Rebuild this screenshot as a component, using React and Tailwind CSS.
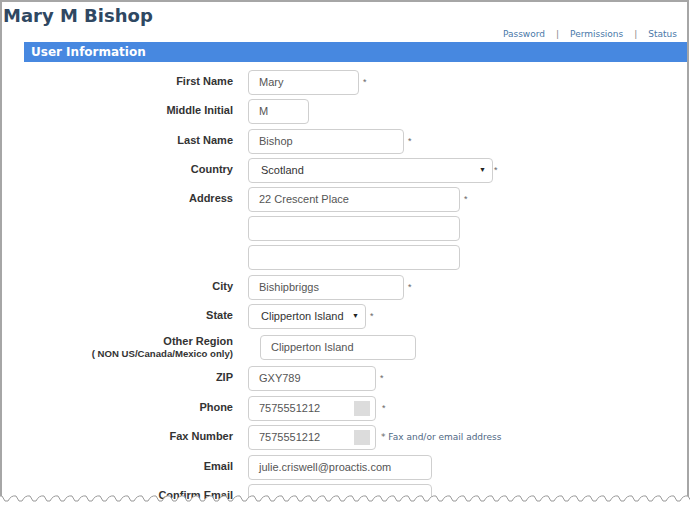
import React from 'react';

const labelFont = { fontFamily: '"Liberation Sans", Arial, sans-serif' };

// small grey required marker
const Req = () => <span className="ml-[4px] self-start pt-[8px] text-[9px] leading-none text-[#666]">*</span>;

const Field = ({ w, value, children }) => (
  <div className={`relative flex h-[25px] items-center rounded-[4px] border border-[#cfcfcf] bg-white pl-[10px] text-[11px] text-[#555] ${w}`}>
    {value}
    {children}
  </div>
);

const SelectBox = ({ w, value }) => (
  <div className={`relative flex h-[25px] items-center rounded-[4px] border border-[#cfcfcf] bg-white pl-[12px] pr-[6px] text-[11px] text-[#333] ${w}`}>
    <span className="flex-1">{value}</span>
    <span className="text-[7px] text-[#222]">▼</span>
  </div>
);

const Row = ({ mt, label, sub, children }) => (
  <div className={`grid grid-cols-[209px_1fr] gap-x-[15px] ${mt}`}>
    <div className="flex flex-col items-end text-right font-bold text-[11px] leading-[13px] text-[#333]">
      {sub ? (
        <>
          <span className="pt-[0px]">{label}</span>
          <span className="whitespace-nowrap text-[9.6px] leading-[12px]">{sub}</span>
        </>
      ) : (
        <span className="pt-[5px]">{label}</span>
      )}
    </div>
    <div className="flex items-start">{children}</div>
  </div>
);

const TornEdge = () => {
  const segs = [];
  for (let x = -6; x < 700; x += 14) {
    segs.push(`L ${x} 9 Q ${x + 3} 3 ${x + 8} 4 L ${x + 11} 9`);
  }
  const d = `M -6 9 ${segs.join(' ')}`;
  return (
    <svg className="absolute left-0 bottom-0" width="690" height="14" viewBox="0 0 690 14">
      <path d={`${d} L 700 14 L -6 14 Z`} fill="#fff" />
      <path d={d} fill="none" stroke="#9a9a9a" strokeWidth="1" />
    </svg>
  );
};

export default function App() {
  return (
    <div className="relative h-[506px] w-[690px] overflow-hidden bg-white" style={labelFont}>
      <div className="h-[506px] w-[689px] border-l-2 border-r-2 border-t-2 border-[#a6a6a6]">
        {/* header */}
        <div className="flex items-start justify-between">
          <h1
            className="pl-[1px] pt-[3px] text-[18px] font-bold leading-[22px] text-[#2f4862]"
            style={{ fontFamily: '"DejaVu Sans", Verdana, sans-serif' }}
          >
            Mary M Bishop
          </h1>
          <div
            className="flex gap-[11px] pr-[10px] pt-[26px] text-[9px] leading-[12px] text-[#4a78a8]"
            style={{ fontFamily: '"DejaVu Sans", Verdana, sans-serif' }}
          >
            <span>Password</span>
            <span className="text-[#888]">|</span>
            <span>Permissions</span>
            <span className="text-[#888]">|</span>
            <span>Status</span>
          </div>
        </div>

        <div className="pl-[22px]">
          <div
            className="mt-[2px] flex h-[20px] items-center bg-[#4788e0] pl-[7px] text-[12px] font-bold text-white"
            style={{ fontFamily: '"DejaVu Sans", Verdana, sans-serif' }}
          >
            User Information
          </div>

          <Row mt="mt-[8px]" label="First Name">
            <Field w="w-[111px]" value="Mary" />
            <Req />
          </Row>
          <Row mt="mt-[4px]" label="Middle Initial">
            <Field w="w-[61px]" value="M" />
          </Row>
          <Row mt="mt-[5px]" label="Last Name">
            <Field w="w-[156px]" value="Bishop" />
            <Req />
          </Row>
          <Row mt="mt-[4px]" label="Country">
            <SelectBox w="w-[245px]" value="Scotland" />
            <span className="ml-[1px] self-start pt-[8px] text-[9px] leading-none text-[#666]">*</span>
          </Row>
          <Row mt="mt-[4px]" label="Address">
            <Field w="w-[212px]" value="22 Crescent Place" />
            <Req />
          </Row>
          <Row mt="mt-[4px]" label="">
            <Field w="w-[212px]" value="" />
          </Row>
          <Row mt="mt-[4px]" label="">
            <Field w="w-[212px]" value="" />
          </Row>
          <Row mt="mt-[5px]" label="City">
            <Field w="w-[156px]" value="Bishipbriggs" />
            <Req />
          </Row>
          <Row mt="mt-[4px]" label="State">
            <SelectBox w="w-[118px]" value="Clipperton Island" />
            <Req />
          </Row>
          <Row mt="mt-[6px]" label="Other Region" sub="( NON US/Canada/Mexico only)">
            <div className="pl-[12px]">
              <Field w="w-[156px]" value="Clipperton Island" />
            </div>
          </Row>
          <Row mt="mt-[6px]" label="ZIP">
            <Field w="w-[128px]" value="GXY789" />
            <Req />
          </Row>
          <Row mt="mt-[5px]" label="Phone">
            <Field w="w-[128px]" value="7575551212">
              <span className="absolute right-[5px] top-[4px] h-[15px] w-[16px] bg-[#dcdcdc]" />
            </Field>
            <span className="ml-[6px] self-start pt-[8px] text-[9px] leading-none text-[#666]">*</span>
          </Row>
          <Row mt="mt-[4px]" label="Fax Number">
            <Field w="w-[128px]" value="7575551212">
              <span className="absolute right-[5px] top-[4px] h-[15px] w-[16px] bg-[#dcdcdc]" />
            </Field>
            <span
              className="ml-[5px] self-start pt-[8px] text-[9px] leading-none text-[#4f6884]"
              style={{ fontFamily: '"DejaVu Sans", Verdana, sans-serif' }}
            >
              <span className="text-[#666]">*</span> Fax and/or email address
            </span>
          </Row>
          <Row mt="mt-[5px]" label="Email">
            <Field w="w-[184px]" value="julie.criswell@proactis.com" />
          </Row>
          <Row mt="mt-[4px]" label="Confirm Email">
            <Field w="w-[184px]" value="" />
          </Row>
        </div>
      </div>
      <TornEdge />
    </div>
  );
}
